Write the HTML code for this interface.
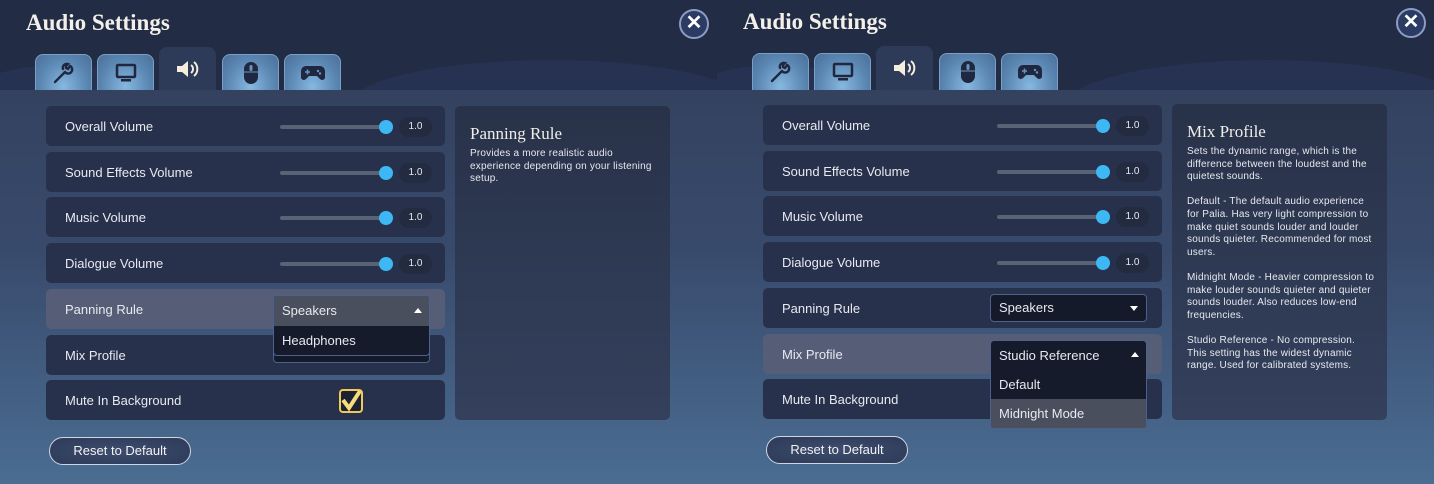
<!DOCTYPE html>
<html><head><meta charset="utf-8"><style>
*{margin:0;padding:0;box-sizing:border-box}
body{width:1434px;height:484px;overflow:hidden;background:#223050;font-family:"Liberation Sans",sans-serif;color:#e6e9ef;position:relative}
.p{position:absolute;top:0;width:717px;height:484px;overflow:hidden;background:linear-gradient(180deg,#34425f 90px,#384a6c 250px,#4a6d92 484px)}
.hd{position:absolute;left:0;top:0;width:717px;height:90px;background:#222c44;overflow:hidden}
.hd .bump{position:absolute;border-radius:50%;background:#273252}
.title{position:absolute;left:26px;top:10px;font-family:"Liberation Serif",serif;font-weight:bold;font-size:23px;color:#f3f0ea}
.close{position:absolute;left:679px;top:9px;width:30px;height:30px;border-radius:50%;background:#2c3b63;border:2px solid #8d9cc4;color:#fff;font-size:20px;font-weight:bold;text-align:center;line-height:25px}
.tab{position:absolute;top:54px;width:57px;height:36px;border-radius:8px 8px 0 0;background:radial-gradient(ellipse at 50% 90%,#86b8e0,#5b87b3 60%,#4b6f99);border:1px solid #7aa0c6;border-bottom:none}
.tab.act{top:47px;height:43px;background:#2d3a58;border:none}
.tab svg{position:absolute;left:50%;top:50%;transform:translate(-50%,-50%)}
.row{position:absolute;left:46px;width:399px;height:40px;background:#27314b;border-radius:5px}
.row.hl{background:#555e76}
.lbl{position:absolute;left:19px;top:13px;font-size:13px;color:#e8eaf0}
.trk{position:absolute;left:234px;top:19px;width:106px;height:4px;border-radius:2px;background:#5a6276}
.knob{position:absolute;left:333px;top:14px;width:14px;height:14px;border-radius:50%;background:#3db8f5}
.val{position:absolute;left:353px;top:11px;width:33px;height:20px;border-radius:10px;background:#222b40;font-size:10px;text-align:center;line-height:20px}
.dd{position:absolute;left:227px;top:6px;width:157px;height:28px;background:#141a2a;border:1px solid #4d618e;border-radius:4px;font-size:13px;padding-left:8px;line-height:26px}
.dd .ar{position:absolute;right:8px;top:11px;width:0;height:0;border-left:4px solid transparent;border-right:4px solid transparent;border-top:5px solid #fff}
.menu{position:absolute;background:#151b2b;border:1px solid #4d618e;border-radius:4px;overflow:hidden;font-size:13px;width:157px}
.menu div{height:29px;line-height:29px;padding-left:8px}
.info{position:absolute;left:455px;top:106px;width:215px;height:314px;border-radius:5px;background:linear-gradient(180deg,#283249,#34405c)}
.info h3{font-family:"Liberation Serif",serif;font-weight:normal;font-size:17px;margin:18px 0 4px 15px;color:#f0eee8}
.info p{font-size:10px;line-height:12.6px;letter-spacing:.2px;margin:0 12px 0 15px;color:#e6e9ef}
.reset{position:absolute;left:49px;top:437px;width:142px;height:28px;border-radius:14px;border:1.5px solid #cfd7e6;background:radial-gradient(ellipse,#3e4d6e,#2d3a58);font-size:13px;text-align:center;line-height:25px;color:#f2f2f2}
.chk{position:absolute;left:293px;top:9px;width:24px;height:24px;border:2px solid #f1c95a;border-radius:4px;background:#1b2232}
</style></head><body>

<div class="p" style="left:0">
<div class="hd"><div class="bump" style="left:-40px;top:65px;width:200px;height:80px"></div><div class="bump" style="left:350px;top:60px;width:400px;height:90px"></div></div>
<div class="title">Audio Settings</div>
<div class="close">✕</div>
<div class="tab" style="left:35px"><svg width="24" height="24" viewBox="0 0 24 24"><path d="M3 21l10-10M13 11a4 4 0 1 0 5-6l-2 3-2-1 0-2 2-2a4 4 0 0 0-5 5" stroke="#1f2840" stroke-width="2.4" fill="none" stroke-linecap="round"/></svg></div>
<div class="tab" style="left:97px"><svg width="22" height="20" viewBox="0 0 22 20"><rect x="2" y="2" width="18" height="12" rx="1" fill="none" stroke="#1f2840" stroke-width="2.5"/><rect x="6" y="16" width="10" height="2.5" fill="#1f2840"/></svg></div>
<div class="tab act" style="left:159px"><svg width="26" height="22" viewBox="0 0 26 22"><path d="M2 8h5l6-5v16l-6-5H2z" fill="#f5eedc"/><path d="M16 7a5 5 0 0 1 0 8M19 4a9 9 0 0 1 0 14" stroke="#f5eedc" stroke-width="2" fill="none"/></svg></div>
<div class="tab" style="left:222px"><svg width="18" height="26" viewBox="0 0 18 26"><rect x="2" y="2" width="14" height="22" rx="7" fill="#1f2840"/><rect x="7.5" y="5" width="3" height="6" rx="1.5" fill="#6b93bd"/><path d="M2 12h14" stroke="#6b93bd" stroke-width="1"/></svg></div>
<div class="tab" style="left:284px"><svg width="26" height="20" viewBox="0 0 26 20"><path d="M6 3h14a5 5 0 0 1 5 5l0 7a3 3 0 0 1-5 1l-3-3H9l-3 3a3 3 0 0 1-5-1V8a5 5 0 0 1 5-5z" fill="#1f2840"/><path d="M5 9h5M7.5 6.5v5" stroke="#6b93bd" stroke-width="1.5"/><circle cx="18" cy="8" r="1.2" fill="#6b93bd"/><circle cx="20" cy="10.5" r="1.2" fill="#6b93bd"/></svg></div>

<div class="row" style="top:106px"><div class="lbl">Overall Volume</div><div class="trk"></div><div class="knob"></div><div class="val">1.0</div></div>
<div class="row" style="top:152px"><div class="lbl">Sound Effects Volume</div><div class="trk"></div><div class="knob"></div><div class="val">1.0</div></div>
<div class="row" style="top:197px"><div class="lbl">Music Volume</div><div class="trk"></div><div class="knob"></div><div class="val">1.0</div></div>
<div class="row" style="top:243px"><div class="lbl">Dialogue Volume</div><div class="trk"></div><div class="knob"></div><div class="val">1.0</div></div>
<div class="row hl" style="top:289px"><div class="lbl">Panning Rule</div></div>
<div class="row" style="top:335px"><div class="lbl">Mix Profile</div><div class="dd" style="top:0">Studio Reference<span class="ar"></span></div></div>
<div class="row" style="top:380px"><div class="lbl">Mute In Background</div><div class="chk"><svg width="20" height="20" viewBox="0 0 20 20" style="position:absolute;left:0;top:0"><path d="M2 9l6 8L19 0" stroke="#f6dc7c" stroke-width="4" fill="none"/></svg></div></div>
<div class="menu" style="left:273px;top:295px"><div style="background:#4a4f5e;height:30px">Speakers<span style="position:absolute;left:140px;top:12px;border-left:4px solid transparent;border-right:4px solid transparent;border-bottom:5px solid #fff"></span></div><div>Headphones</div></div>
<div class="info"><h3>Panning Rule</h3><p>Provides a more realistic audio experience depending on your listening setup.</p></div>
<div class="reset">Reset to Default</div>
</div>

<div class="p" style="left:717px;">
<div class="hd"><div class="bump" style="left:-40px;top:65px;width:200px;height:80px"></div><div class="bump" style="left:350px;top:60px;width:400px;height:90px"></div></div>
<div class="title" style="top:9px">Audio Settings</div>
<div class="close" style="top:8px">✕</div>
<div class="tab" style="left:35px;top:53px;height:37px"><svg width="24" height="24" viewBox="0 0 24 24"><path d="M3 21l10-10M13 11a4 4 0 1 0 5-6l-2 3-2-1 0-2 2-2a4 4 0 0 0-5 5" stroke="#1f2840" stroke-width="2.4" fill="none" stroke-linecap="round"/></svg></div>
<div class="tab" style="left:97px;top:53px;height:37px"><svg width="22" height="20" viewBox="0 0 22 20"><rect x="2" y="2" width="18" height="12" rx="1" fill="none" stroke="#1f2840" stroke-width="2.5"/><rect x="6" y="16" width="10" height="2.5" fill="#1f2840"/></svg></div>
<div class="tab act" style="left:159px;top:46px;height:44px"><svg width="26" height="22" viewBox="0 0 26 22"><path d="M2 8h5l6-5v16l-6-5H2z" fill="#f5eedc"/><path d="M16 7a5 5 0 0 1 0 8M19 4a9 9 0 0 1 0 14" stroke="#f5eedc" stroke-width="2" fill="none"/></svg></div>
<div class="tab" style="left:222px;top:53px;height:37px"><svg width="18" height="26" viewBox="0 0 18 26"><rect x="2" y="2" width="14" height="22" rx="7" fill="#1f2840"/><rect x="7.5" y="5" width="3" height="6" rx="1.5" fill="#6b93bd"/><path d="M2 12h14" stroke="#6b93bd" stroke-width="1"/></svg></div>
<div class="tab" style="left:284px;top:53px;height:37px"><svg width="26" height="20" viewBox="0 0 26 20"><path d="M6 3h14a5 5 0 0 1 5 5l0 7a3 3 0 0 1-5 1l-3-3H9l-3 3a3 3 0 0 1-5-1V8a5 5 0 0 1 5-5z" fill="#1f2840"/><path d="M5 9h5M7.5 6.5v5" stroke="#6b93bd" stroke-width="1.5"/><circle cx="18" cy="8" r="1.2" fill="#6b93bd"/><circle cx="20" cy="10.5" r="1.2" fill="#6b93bd"/></svg></div>

<div class="row" style="top:105px"><div class="lbl">Overall Volume</div><div class="trk"></div><div class="knob"></div><div class="val">1.0</div></div>
<div class="row" style="top:151px"><div class="lbl">Sound Effects Volume</div><div class="trk"></div><div class="knob"></div><div class="val">1.0</div></div>
<div class="row" style="top:196px"><div class="lbl">Music Volume</div><div class="trk"></div><div class="knob"></div><div class="val">1.0</div></div>
<div class="row" style="top:242px"><div class="lbl">Dialogue Volume</div><div class="trk"></div><div class="knob"></div><div class="val">1.0</div></div>
<div class="row" style="top:288px"><div class="lbl">Panning Rule</div><div class="dd">Speakers<span class="ar"></span></div></div>
<div class="row hl" style="top:334px"><div class="lbl">Mix Profile</div></div>
<div class="row" style="top:379px"><div class="lbl">Mute In Background</div></div>
<div class="menu" style="left:273px;top:340px"><div>Studio Reference<span style="position:absolute;left:140px;top:11px;border-left:4px solid transparent;border-right:4px solid transparent;border-bottom:5px solid #fff"></span></div><div>Default</div><div style="background:#4a4f5e">Midnight Mode</div></div>
<div class="info" style="top:104px;height:316px"><h3>Mix Profile</h3><p>Sets the dynamic range, which is the difference between the loudest and the quietest sounds.<br><br>Default - The default audio experience for Palia. Has very light compression to make quiet sounds louder and louder sounds quieter. Recommended for most users.<br><br>Midnight Mode - Heavier compression to make louder sounds quieter and quieter sounds louder. Also reduces low-end frequencies.<br><br>Studio Reference - No compression. This setting has the widest dynamic range. Used for calibrated systems.</p></div>
<div class="reset" style="top:436px">Reset to Default</div>
</div>
</body></html>
